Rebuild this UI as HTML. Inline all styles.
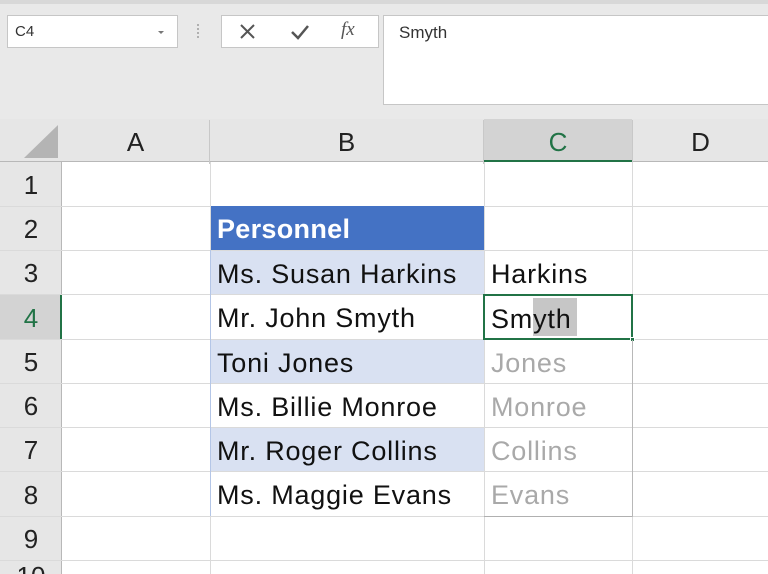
<!DOCTYPE html>
<html style="overflow:hidden;height:574px"><head><style>
body{margin:0;width:768px;height:574px;overflow:hidden;background:#e9e9e9;font-family:"Liberation Sans",Calibri,sans-serif;position:relative}
.a{position:absolute;box-sizing:border-box}
.t{font-size:27px;letter-spacing:0.8px;line-height:46px;white-space:nowrap;padding-left:6px;color:#111}
.h{font-size:26px;line-height:44px;text-align:center;color:#222}
</style></head><body>
<div class="a" style="left:0;top:0;width:768px;height:4px;background:#d8d8d8"></div>
<div class="a" style="left:7px;top:15px;width:171px;height:33px;background:#fff;border:1px solid #c6c6c6;font-size:15px;line-height:31px;padding-left:7px;color:#333">C4</div>
<div class="a" style="left:158px;top:31px;width:0;height:0;border-left:3px solid transparent;border-right:3px solid transparent;border-top:3px solid #777"></div>
<div class="a" style="left:197px;top:24px;width:2px;height:14px;border-left:2px dotted #b0b0b0"></div>
<div class="a" style="left:221px;top:15px;width:158px;height:33px;background:#fff;border:1px solid #c6c6c6"></div>
<svg class="a" style="left:238px;top:22px" width="20" height="20"><path d="M3 3L16 16M16 3L3 16" stroke="#555" stroke-width="2"/></svg>
<svg class="a" style="left:289px;top:22px" width="22" height="20"><path d="M3 10L9 16L19 4" stroke="#555" stroke-width="2.5" fill="none"/></svg>
<div class="a" style="left:341px;top:19px;font-family:'Liberation Serif',serif;font-style:italic;font-size:19px;color:#555">fx</div>
<div class="a" style="left:383px;top:15px;width:390px;height:90px;background:#fff;border:1px solid #c6c6c6;font-size:17px;padding:7px 0 0 15px;color:#333">Smyth</div>
<div class="a" style="left:0;top:119px;width:768px;height:455px;background:#fff"></div>
<div class="a" style="left:0;top:119px;width:768px;height:43px;background:#e6e6e6;border-bottom:1px solid #b8b8b8"></div>
<div class="a" style="left:0;top:162px;width:62px;height:412px;background:#e6e6e6;border-right:1px solid #b8b8b8"></div>
<svg class="a" style="left:22px;top:123px" width="38" height="37"><path d="M36 2L36 35L2 35Z" fill="#b4b4b4"/></svg>
<div class="a" style="left:484px;top:119px;width:148px;height:43px;background:#d3d3d3;border-bottom:2px solid #217346"></div>
<div class="a" style="left:0;top:295px;width:62px;height:44px;background:#d3d3d3;border-right:2px solid #217346"></div>
<div class="a h" style="left:62px;top:120px;width:148px;border-right:1px solid #c8c8c8">A</div>
<div class="a h" style="left:210px;top:120px;width:274px;border-right:1px solid #c8c8c8">B</div>
<div class="a h" style="left:484px;top:120px;width:148px;color:#217346">C</div>
<div class="a h" style="left:632px;top:120px;width:136px;border-left:1px solid #c8c8c8">D</div>
<div class="a h" style="left:0;top:163px;width:62px">1</div>
<div class="a h" style="left:0;top:207px;width:62px">2</div>
<div class="a h" style="left:0;top:251px;width:62px">3</div>
<div class="a h" style="left:0;top:296px;width:62px;color:#217346">4</div>
<div class="a h" style="left:0;top:340px;width:62px">5</div>
<div class="a h" style="left:0;top:384px;width:62px">6</div>
<div class="a h" style="left:0;top:428px;width:62px">7</div>
<div class="a h" style="left:0;top:473px;width:62px">8</div>
<div class="a h" style="left:0;top:517px;width:62px">9</div>
<div class="a h" style="left:0;top:561px;width:62px;height:13px;overflow:hidden;line-height:30px">10</div>
<div class="a" style="left:0;top:206px;width:768px;height:1px;background:#dadada"></div>
<div class="a" style="left:0;top:250px;width:768px;height:1px;background:#dadada"></div>
<div class="a" style="left:0;top:294px;width:768px;height:1px;background:#dadada"></div>
<div class="a" style="left:0;top:339px;width:768px;height:1px;background:#dadada"></div>
<div class="a" style="left:0;top:383px;width:768px;height:1px;background:#dadada"></div>
<div class="a" style="left:0;top:427px;width:768px;height:1px;background:#dadada"></div>
<div class="a" style="left:0;top:471px;width:768px;height:1px;background:#dadada"></div>
<div class="a" style="left:0;top:516px;width:768px;height:1px;background:#dadada"></div>
<div class="a" style="left:0;top:560px;width:768px;height:1px;background:#dadada"></div>
<div class="a" style="left:210px;top:162px;width:1px;height:412px;background:#dadada"></div>
<div class="a" style="left:484px;top:162px;width:1px;height:412px;background:#dadada"></div>
<div class="a" style="left:632px;top:162px;width:1px;height:412px;background:#dadada"></div>
<div class="a t" style="left:211px;top:206px;width:273px;height:44px;background:#4472c4;color:#fff;font-weight:bold;letter-spacing:0.3px">Personnel</div>
<div class="a t" style="left:211px;top:251px;width:273px;height:43px;background:#d9e1f2">Ms. Susan Harkins</div>
<div class="a t" style="left:211px;top:295px;width:273px;height:44px">Mr. John Smyth</div>
<div class="a t" style="left:211px;top:340px;width:273px;height:43px;background:#d9e1f2">Toni Jones</div>
<div class="a t" style="left:211px;top:384px;width:273px;height:43px">Ms. Billie Monroe</div>
<div class="a t" style="left:211px;top:428px;width:273px;height:43px;background:#d9e1f2">Mr. Roger Collins</div>
<div class="a t" style="left:211px;top:472px;width:273px;height:44px">Ms. Maggie Evans</div>
<div class="a" style="left:210px;top:250px;width:1px;height:266px;background:#b4c6e7"></div>
<div class="a t" style="left:485px;top:251px;width:147px">Harkins</div>
<div class="a" style="left:533px;top:298px;width:44px;height:38px;background:#c6c6c6"></div>
<div class="a t" style="left:485px;top:296px;width:147px">Smyth</div>
<div class="a" style="left:483px;top:294px;width:150px;height:46px;border:2px solid #217346"></div>
<div class="a" style="left:630px;top:337px;width:5px;height:5px;background:#217346;border:1px solid #fff"></div>
<div class="a t" style="left:485px;top:340px;color:#a9a9a9">Jones</div>
<div class="a t" style="left:485px;top:384px;color:#a9a9a9">Monroe</div>
<div class="a t" style="left:485px;top:428px;color:#a9a9a9">Collins</div>
<div class="a t" style="left:485px;top:472px;color:#a9a9a9">Evans</div>
<div class="a" style="left:484px;top:516px;width:149px;height:1px;background:#b0b0b0"></div>
<div class="a" style="left:632px;top:340px;width:1px;height:177px;background:#b8b8b8"></div>
</body></html>
